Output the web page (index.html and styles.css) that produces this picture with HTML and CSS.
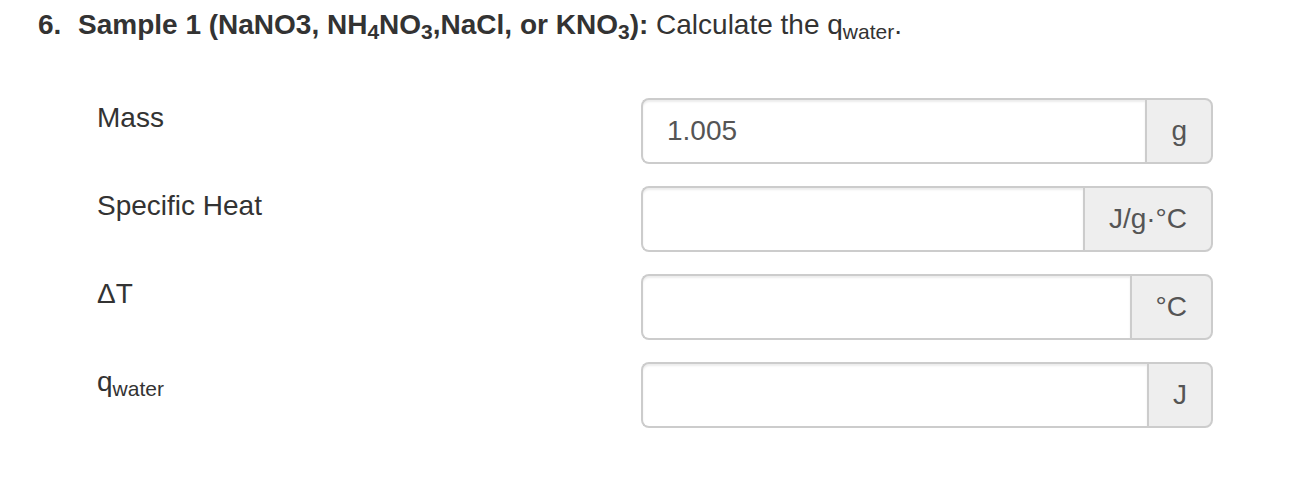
FILE: index.html
```html
<!DOCTYPE html>
<html>
<head>
<meta charset="utf-8">
<link rel="stylesheet" href="styles.css">
</head>
<body>
<div class="page">
  <h4 class="question"><span class="num">6.</span><span class="qtext"><b>Sample 1 (NaNO3, NH<sub>4</sub>NO<sub>3</sub>,NaCl, or KNO<sub>3</sub>):</b> Calculate the q<sub>water</sub>.</span></h4>
  <form class="rows">
    <div class="row">
      <label class="lbl">Mass</label>
      <div class="group"><input class="field" type="text" value="1.005"><span class="addon">g</span></div>
    </div>
    <div class="row">
      <label class="lbl">Specific Heat</label>
      <div class="group"><input class="field" type="text" value=""><span class="addon">J/g·°C</span></div>
    </div>
    <div class="row">
      <label class="lbl">ΔT</label>
      <div class="group"><input class="field" type="text" value=""><span class="addon">°C</span></div>
    </div>
    <div class="row">
      <label class="lbl">q<sub>water</sub></label>
      <div class="group"><input class="field" type="text" value=""><span class="addon">J</span></div>
    </div>
  </form>
</div>
</body>
</html>
```
FILE: styles.css
```css
html, body {
  margin: 0;
  padding: 0;
  background: #ffffff;
}
body {
  font-family: "Liberation Sans", Arial, Helvetica, sans-serif;
  font-size: 28px;
  line-height: 40px;
  color: #333333;
}
.page {
  padding: 5px 0 0 38px;
}
.question {
  margin: 0;
  font-size: 28px;
  font-weight: normal;
  line-height: 40px;
  display: flex;
}
.question .num {
  font-weight: bold;
  width: 40px;
}
.question b {
  font-weight: bold;
}
sub {
  font-size: 75%;
  line-height: 0;
  position: relative;
  vertical-align: baseline;
  bottom: -0.25em;
}
.rows {
  margin-top: 53px;
  padding-left: 59px;
  display: flex;
  flex-direction: column;
  gap: 22px;
}
.row {
  display: grid;
  grid-template-columns: 544px 572px;
  align-items: start;
}
.lbl {
  line-height: 40px;
  color: #333333;
}
.group {
  display: flex;
  height: 66px;
}
.field {
  flex: 1;
  min-width: 0;
  box-sizing: border-box;
  height: 66px;
  margin: 0;
  padding: 0 24px;
  border: 2px solid #cccccc;
  border-right: none;
  border-radius: 8px 0 0 8px;
  box-shadow: inset 0 2px 2px rgba(0,0,0,0.075);
  font-family: "Liberation Sans", Arial, Helvetica, sans-serif;
  font-size: 28px;
  color: #555555;
  background: #ffffff;
  outline: none;
}
.addon {
  box-sizing: border-box;
  height: 66px;
  padding: 0 24px;
  display: flex;
  align-items: center;
  border: 2px solid #cccccc;
  border-radius: 0 8px 8px 0;
  background: #eeeeee;
  color: #555555;
  font-size: 28px;
  white-space: nowrap;
}
```
